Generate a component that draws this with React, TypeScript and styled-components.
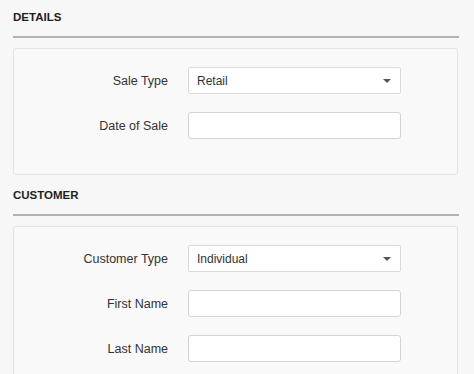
import React from 'react';
import styled, { createGlobalStyle } from 'styled-components';

const GlobalStyle = createGlobalStyle`
  body {
    margin: 0;
    background: #f7f7f7;
    font-family: "Liberation Sans", Arial, sans-serif;
    color: #333;
  }
`;

type Field = { label: string; value?: string; select?: boolean };

const sections: { title: string; fields: Field[] }[] = [
  {
    title: 'DETAILS',
    fields: [
      { label: 'Sale Type', value: 'Retail', select: true },
      { label: 'Date of Sale' },
    ],
  },
  {
    title: 'CUSTOMER',
    fields: [
      { label: 'Customer Type', value: 'Individual', select: true },
      { label: 'First Name' },
      { label: 'Last Name' },
    ],
  },
];

const App: React.FC = () => {
  return (
    <>
      <GlobalStyle />
      <Page>
        {sections.map((section) => (
          <Section key={section.title}>
            <Heading>{section.title}</Heading>
            <Panel>
              {section.fields.map((field) => (
                <Row key={field.label}>
                  <Label>{field.label}</Label>
                  {field.select ? (
                    <Select>
                      <span>{field.value}</span>
                      <Caret />
                    </Select>
                  ) : (
                    <TextInput />
                  )}
                </Row>
              ))}
            </Panel>
          </Section>
        ))}
      </Page>
    </>
  );
};

const Page = styled.div`
  padding: 0 15px 0 13px;
  height: 374px;
  overflow: hidden;
`;

const Section = styled.section`
  padding-bottom: 3px;
`;

const Heading = styled.h2`
  margin: 0 0 10px;
  padding: 10px 0 12px;
  font-size: 11.5px;
  line-height: 14px;
  font-weight: bold;
  color: #1e1e1e;
  border-bottom: 2px solid #b2b2b2;
`;

const Panel = styled.div`
  width: 445px;
  box-sizing: border-box;
  background: #f9f9f9;
  border: 1px solid #e3e3e3;
  border-radius: 3px;
  padding: 18px 0 35px;
  display: flex;
  flex-direction: column;
  gap: 18px;
`;

const Row = styled.div`
  display: flex;
  align-items: center;
  gap: 20px;
`;

const Label = styled.label`
  width: 154px;
  text-align: right;
  font-size: 12.5px;
  color: #333;
`;

const TextInput = styled.div`
  width: 213px;
  height: 27px;
  box-sizing: border-box;
  background: #fff;
  border: 1px solid #d3d3d3;
  border-radius: 3px;
`;

const Select = styled(TextInput)`
  display: flex;
  align-items: center;
  justify-content: space-between;
  padding: 0 9px 0 8px;
  font-size: 12px;
  color: #333;
  border-color: #dadada;
  border-radius: 2px;
`;

const Caret = styled.span`
  width: 0;
  height: 0;
  border-left: 4px solid transparent;
  border-right: 4px solid transparent;
  border-top: 4px solid #555;
`;

export default App;
